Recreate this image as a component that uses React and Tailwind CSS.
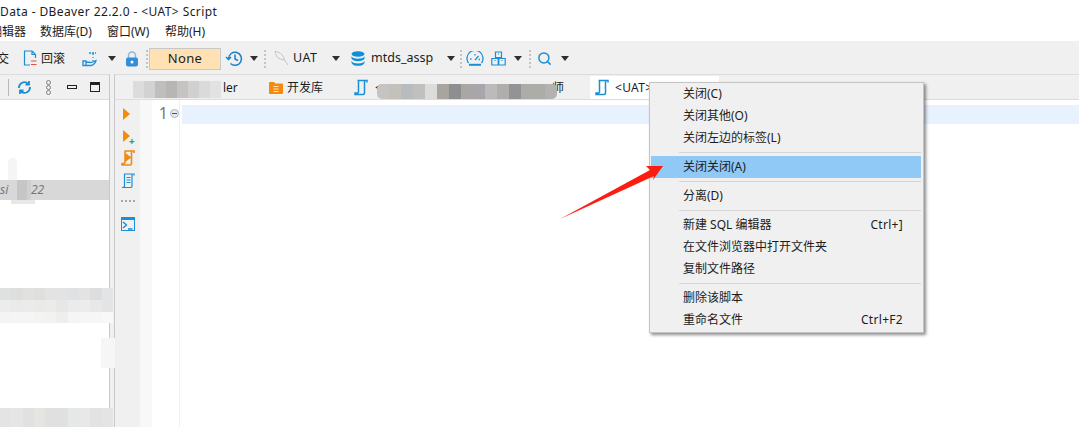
import { Search } from "lucide-react";

const font = { fontFamily: '"Noto Sans", "Noto Sans CJK SC", sans-serif' };

const Caret = ({ className = "" }) => (
  <span className={`w-0 h-0 border-x-[4px] border-x-transparent border-t-[5px] border-t-[#2e2e2e] ${className}`} />
);

const Grip = ({ className = "" }) => (
  <span className={`flex flex-col gap-[2px] ${className}`}>
    {[0, 1, 2, 3, 4].map((i) => (
      <span key={i} className="w-[2px] h-[2px] bg-[#c4c4c0]" />
    ))}
  </span>
);

const ScriptIcon = ({ className = "" }) => (
  <svg width="14" height="17" viewBox="0 0 14 17" fill="none" stroke="#1b8fd6" strokeWidth="1.500" className={className}>
    <path d="M3.500 1.500H13V3.500M10.500 1.500V14c0 1-.7 1.500-1.500 1.500H1v-1.500h2.500c.6 0 1-.5 1-1V2" />
  </svg>
);

const DbIcon = ({ className = "" }) => (
  <svg width="14" height="15" viewBox="0 0 14 15" className={className}>
    <ellipse cx="7" cy="3" rx="6.500" ry="2.800" fill="#0f8fd8" />
    <path d="M.5 5.200c1 1.800 3.500 2.500 6.500 2.500s5.500-.7 6.500-2.500v2.600c-1 1.700-3.500 2.400-6.500 2.400S1.500 9.500.5 7.800z" fill="#0f8fd8" />
    <path d="M.5 10c1 1.800 3.500 2.500 6.500 2.500s5.500-.7 6.500-2.500v2c-1 2-3.500 2.800-6.500 2.800S1.500 14 .5 12z" fill="#0f8fd8" />
  </svg>
);

const ConnIcon = ({ className = "" }) => (
  <svg width="16" height="17" viewBox="0 0 16 17" fill="none" stroke="#bcc6ce" strokeWidth="1" className={className}>
    <path d="M1 1.500c2 .2 4 .8 5.500 2 2 1.500 3.500 4 4 6.500l3.500 5M1 1.500C1.500 4 2.500 7 5 8.500c2 1 4 1 5.500 1.500" />
  </svg>
);

const MenuItem = ({ label, shortcut, active }) => (
  <div className={`flex items-center justify-between h-[22px] pl-[32px] pr-[18px] text-[12px] text-[#1c1c1c] ${active ? "bg-[#90c8f6]" : ""}`}>
    <span>{label}</span>
    {shortcut && <span className="tracking-[0.3px]">{shortcut}</span>}
  </div>
);

const Sep = () => <div className="h-px bg-[#d6d6d6] ml-[28px] my-[3px]" />;

const Mosaic = ({ colors, className, cell = "w-[12px]" }) => (
  <div className={`absolute flex blur-[0.5px] ${className}`}>
    {colors.map((c, i) => (
      <div key={i} className={`${cell} h-full`} style={{ backgroundColor: c }} />
    ))}
  </div>
);

export default function App() {
  return (
    <div className="relative w-[1079px] h-[427px] overflow-hidden bg-white text-[#1c1c1c]" style={font}>
      {/* title and menu */}
      <div className="h-[22px] pt-[1px] flex items-center text-[12px] tracking-[0.4px] whitespace-nowrap">Data - DBeaver 22.2.0 - &lt;UAT&gt; Script</div>
      <div className="h-[19px] flex items-center text-[12px] whitespace-nowrap">
        <span className="ml-[-10px] w-[50px]">编辑器</span>
        <span className="w-[67px]">数据库(D)</span>
        <span className="w-[58px]">窗口(W)</span>
        <span>帮助(H)</span>
      </div>

      {/* toolbar */}
      <div className="h-[33px] pt-[2px] bg-[#f0f0f0] flex items-center text-[12px] whitespace-nowrap">
        <span className="ml-[-3px] w-[26px]">交</span>
        <svg width="14" height="17" viewBox="0 0 14 17" fill="none" className="mr-[4px]">
          <path d="M9 1H1.500v14H7M9 1l3.500 3.500V8M9 1v3.500h3.500" stroke="#1b8fd6" strokeWidth="1.200" />
          <path d="M8 11h5.500M8 14.500h5.500" stroke="#e0503a" strokeWidth="1.200" />
        </svg>
        <span className="w-[41px]">回滚</span>
        <svg width="15" height="16" viewBox="0 0 15 16" fill="none" stroke="#1b8fd6" strokeWidth="1.300">
          <path d="M1 10h3v4.500H1zM4 11c3 0 4 .5 5 .5s4-1.500 5-2c0 2-3 5-5 5H4" />
          <path d="M7 2h7M11 2v2M11 6v1M11 9v1" strokeDasharray="2 1" />
        </svg>
        <Caret className="ml-[11px]" />
        <svg width="14" height="16" viewBox="0 0 14 16" className="ml-[9px]">
          <path d="M3.500 7V4.500a3.500 3.500 0 0 1 7 0V7" fill="none" stroke="#8fb8d8" strokeWidth="1.500" />
          <rect x="1" y="6.500" width="12" height="9" rx="2" fill="#2f8fd8" />
          <circle cx="7" cy="11" r="1.500" fill="#fff" />
        </svg>
        <Grip className="ml-[7px]" />
        <div className="ml-[1px] w-[72px] h-[22px] flex items-center justify-center bg-[#ffe1b4] border border-[#c8c8c8] text-[13px] tracking-[0.3px]">None</div>
        <svg width="19" height="17" viewBox="0 0 19 17" fill="none" stroke="#1b7fc6" strokeWidth="1.500" className="ml-[4px]">
          <path d="M3.500 8.500a6.500 6.500 0 1 1 2 5M1 7l2.500 2.500L6 7M10 4.500V9l3 1.500" />
        </svg>
        <Caret className="ml-[6px]" />
        <Grip className="ml-[6px]" />
        <ConnIcon className="ml-[8px]" />
        <span className="ml-[3px] w-[39px] text-[12.5px] tracking-[0.4px]">UAT</span>
        <Caret />
        <DbIcon className="ml-[11px]" />
        <span className="ml-[6px] w-[76px] text-[12.5px]">mtds_assp</span>
        <Caret />
        <Grip className="ml-[5px]" />
        <svg width="18" height="15" viewBox="0 0 18 15" fill="none" stroke="#1b8fd6" strokeWidth="1.300" className="ml-[4px]">
          <path d="M2.500 12a8 8 0 1 1 13 0M9 9l3.500-4M4 8h1.500M12.500 8.500H14M9 3v1.500" />
          <path d="M3 13.800h12" strokeWidth="2" />
        </svg>
        <svg width="15" height="15" viewBox="0 0 15 15" fill="none" stroke="#1b8fd6" strokeWidth="1.200" className="ml-[7px]">
          <path d="M4.500 1h6v5.500h-6zM.8 7.500h6.400V14H.8zM7.800 7.500h6.400V14H7.800zM7 3h1M3.500 9.500h1M10.500 9.500h1" />
        </svg>
        <Caret className="ml-[8px]" />
        <Grip className="ml-[7px]" />
        <Search size={15} stroke="#1b8fd6" strokeWidth={2.400} className="ml-[6px]" />
        <Caret className="ml-[9px]" />
      </div>

      {/* body */}
      <div className="flex h-[353px]">
        {/* left panel */}
        <div className="w-[109px] flex flex-col bg-white">
          <div className="h-[26px] bg-[#f0f0f0] border-y border-[#dcdcdc] flex items-center shrink-0">
            <span className="w-px h-[17px] bg-[#b8b8b8] ml-[8px]" />
            <svg width="15" height="15" viewBox="0 0 15 15" fill="none" stroke="#1b8fd6" strokeWidth="1.800" className="ml-[8px]">
              <path d="M2 8a5.500 5.500 0 0 1 9-4.500M13 7a5.500 5.500 0 0 1-9 4.500M8.500 4.500h3.500V1M6.500 10.500H3V14" />
            </svg>
            <span className="ml-[14px] flex flex-col">
              {[0, 1, 2].map((i) => (
                <span key={i} className="w-[5px] h-[5px] rounded-full border border-[#808080]" />
              ))}
            </span>
            <span className="ml-[16px] w-[10px] h-[4px] border border-[#222]" />
            <span className="ml-[13px] w-[10px] h-[10px] border border-[#222] border-t-[3px]" />
          </div>
          <div className="h-[80px] shrink-0" />
          <div className="h-[20px] bg-[#d8d8d8] flex items-center justify-between text-[12px] italic text-[#6f7a88] shrink-0">
            <span>si</span>
            <span className="w-[78px]">22</span>
          </div>
        </div>

        {/* splitter */}
        <div className="w-[6px] bg-[#f0f0f0] border-x border-[#c9c9c9]" />

        {/* editor */}
        <div className="flex-1 flex flex-col min-w-0">
          <div className="h-[26px] pt-[1px] bg-[#f0f0f0] border-y border-[#dcdcdc] flex items-center text-[12px] whitespace-nowrap shrink-0">
            <div className="w-[154px] flex items-center justify-start pl-[108px]">
              <span>ler</span>
            </div>
            <div className="w-[85px] flex items-center">
              <svg width="14" height="13" viewBox="0 0 14 13">
                <path d="M0 2a1 1 0 0 1 1-1h4l1.500 1.500H13a1 1 0 0 1 1 1V12a1 1 0 0 1-1 1H1a1 1 0 0 1-1-1z" fill="#f58a0b" />
                <path d="M4.500 5.500h5M4.500 8h5M4.500 10.500h5" stroke="#ffe8c8" strokeWidth="1.200" />
              </svg>
              <span className="ml-[4px]">开发库</span>
            </div>
            <div className="w-[236px] flex items-center">
              <ScriptIcon />
              <span className="ml-[7px] flex-1">&lt;</span>
              <span className="mr-[26px]">师</span>
            </div>
            <div className="w-[129px] h-full bg-white flex items-center pl-[5px]">
              <ScriptIcon />
              <span className="ml-[6px] tracking-[0.3px]">&lt;UAT&gt;</span>
            </div>
          </div>
          <div className="flex flex-1">
            <div className="w-[25px] bg-[#f0f0f0] flex flex-col items-center pt-[8px]">
              <span className="w-0 h-0 border-y-[6px] border-y-transparent border-l-[7px] border-l-[#f58a0b] mr-[2px]" />
              <span className="relative w-0 h-0 border-y-[6px] border-y-transparent border-l-[7px] border-l-[#f58a0b] mt-[10px] mr-[2px]">
                <span className="absolute left-[-1px] top-[0px] text-[10px] leading-[10px] font-bold text-[#3f9f3f]">+</span>
              </span>
              <svg width="14" height="16" viewBox="0 0 14 16" fill="none" stroke="#f08a12" strokeWidth="1.600" className="mt-[8px]">
                <path d="M3.500 1H13v2M10.500 1v12c0 1-.7 2-1.500 2H1v-1.500h2c.6 0 1-.5 1-1V1" />
                <path d="M5 4.500l4 3-4 3z" fill="#f08a12" />
              </svg>
              <svg width="14" height="15" viewBox="0 0 14 15" fill="none" stroke="#1b8fd6" strokeWidth="1.200" className="mt-[7px]">
                <path d="M3 1h10v1.500M3.500 1.500V13c0 .7-1 1.500-2.500 1.500h8.500c1 0 1.500-.8 1.500-1.500V1M5.500 4.500h4M5.500 7h4M5.500 9.500h4" />
              </svg>
              <span className="mt-[12px] flex gap-[2px]">
                {[0, 1, 2, 3].map((i) => (
                  <span key={i} className="w-[2px] h-[2px] bg-[#a8a8a8]" />
                ))}
              </span>
              <div className="mt-[15px] w-[14px] h-[14px] border border-[#1b8fd6] border-t-[3px] flex items-center justify-center">
                <svg width="11" height="9" viewBox="0 0 11 9" fill="none" stroke="#1b8fd6" strokeWidth="1.400">
                  <path d="M1 1l3.500 3L1 7M6 8h4.500" />
                </svg>
              </div>
            </div>
            <div className="w-[12px] bg-[#f8f8f8]" />
            <div className="w-[28px] border-r border-[#f0f0f0] flex justify-end items-start pt-[4px] text-[16px] leading-[19px] text-[#777]">
              <span>1</span>
              <span className="ml-[2px] mt-[5px] w-[9px] h-[9px] rounded-full border border-[#a8b8c8] bg-[#e4e9ee] flex items-center justify-center">
                <span className="w-[5px] h-px bg-[#44546a]" />
              </span>
            </div>
            <div className="flex-1">
              <div className="ml-[2px] mt-[5px] h-[19px] bg-[#e8f2fe]" />
            </div>
          </div>
        </div>
      </div>

      {/* pixelated patches */}
      <Mosaic className="left-[133px] top-[81px] h-[17px]" cell="w-[11px]" colors={["#dcdcdc", "#d2d2d2", "#c0bebc", "#b8b6b4", "#c6c4c2", "#d0d0d0", "#dadada", "#e2e2e2"]} />
      <Mosaic className="left-[377px] top-[84px] h-[15px] rounded-[5px] overflow-hidden" colors={["#c6c4c2", "#c4c0ba", "#b8bcbe", "#c2c0bc", "#dcdcda", "#a8a4a0", "#8e8e90", "#aaa6a4", "#a8a6aa", "#bcbaba", "#b0aeaa", "#949296", "#acaca8", "#aeaca8", "#b4b2ae"]} />
      <Mosaic className="left-[0px] top-[288px] h-[12px]" cell="w-[11.300px]" colors={["#dfe1e0", "#dedede", "#e0e2e0", "#dfdfdc", "#e2e3e3", "#e3e3e3", "#dfe2e3", "#e2e3e3", "#dddddd", "#e2e4e6"]} />
      <Mosaic className="left-[0px] top-[300px] h-[12px]" cell="w-[11.300px]" colors={["#ececec", "#e9eaea", "#ecebe9", "#eaeaea", "#ecebe9", "#e6e8e8", "#ebebeb", "#ececea", "#e8e8e8", "#e2e4e6"]} />
      <Mosaic className="left-[0px] top-[312px] h-[11px]" cell="w-[11.300px]" colors={["#f4f4f4", "#f5f5f5", "#f5f5f5", "#f3f3f1", "#f2f2f0", "#eeeeee", "#f5f5f5", "#f6f6f6", "#f6f6f6", "#f8f8f8"]} />
      <Mosaic className="left-[0px] top-[408px] h-[19px]" cell="w-[11.300px]" colors={["#e4e4e4", "#e6e6e6", "#dfe1e2", "#e6e5e2", "#e0e0e0", "#dee0e2", "#e6e8e8", "#e8e8e8", "#e2e2e2", "#e4e4e4"]} />
      <div className="absolute left-[8px] top-[158px] w-[9px] h-[22px] rounded-t-[6px] bg-[#f5f5f5]" />
      <div className="absolute left-[17px] top-[180px] w-[10px] h-[20px] bg-[#c6c6c6]" />
      <div className="absolute left-[27px] top-[180px] w-[4px] h-[20px] bg-[#d0d0d0]" />
      <div className="absolute left-[11px] top-[200px] w-[24px] h-[4px] bg-[#e8e8e8]" />
      <div className="absolute left-[101px] top-[338px] w-[14px] h-[30px] bg-[#f6f6f6]" />

      {/* context menu */}
      <div className="absolute left-[649px] top-[82px] w-[275px] h-[251px] bg-[#f0f0f0] border border-[#c4c4c4] shadow-[2px_2px_3px_rgba(0,0,0,0.45)] pl-[1px] pr-[2px]">
        <MenuItem label="关闭(C)" />
        <MenuItem label="关闭其他(O)" />
        <MenuItem label="关闭左边的标签(L)" />
        <Sep />
        <MenuItem label="关闭关闭(A)" active />
        <Sep />
        <MenuItem label="分离(D)" />
        <Sep />
        <MenuItem label="新建 SQL 编辑器" shortcut="Ctrl+]" />
        <MenuItem label="在文件浏览器中打开文件夹" />
        <MenuItem label="复制文件路径" />
        <Sep />
        <MenuItem label="删除该脚本" />
        <MenuItem label="重命名文件" shortcut="Ctrl+F2" />
      </div>

      {/* annotation arrow */}
      <svg className="absolute left-0 top-0 pointer-events-none" width="1079" height="427" viewBox="0 0 1079 427">
        <polygon points="560,219 650,170 646,166 663,166 653,180 654,176" fill="#fb1d12" />
      </svg>
    </div>
  );
}
